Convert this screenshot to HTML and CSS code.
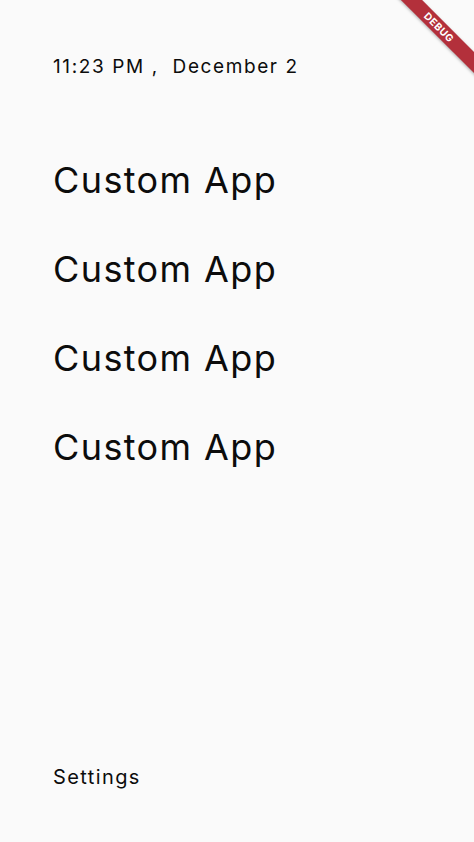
FILE: index.html
```html
<!DOCTYPE html>
<html lang="en">
<head>
    <meta charset="UTF-8">
    <meta name="viewport" content="width=device-width, initial-scale=1.0">
    <title>Custom App</title>
    <link rel="stylesheet" href="styles.css">
</head>
<body>
<div class="screen">
    <p class="clock">11:23 PM ,&nbsp; December 2</p>
    <ul class="apps">
        <li>Custom App</li>
        <li>Custom App</li>
        <li>Custom App</li>
        <li>Custom App</li>
    </ul>
    <p class="settings">Settings</p>
    <div class="banner">DEBUG</div>
</div>
</body>
</html>
```

FILE: styles.css
```css
* {margin:0; padding:0; list-style:none; box-sizing:border-box;}
body {background:#fafafa; font-family:Inter, "Noto Sans", sans-serif; color:#0c0c0c;}
.screen {position:relative; height:842px; overflow:hidden; padding:52px 0 0 53px; display:flex; flex-direction:column;}
.clock {font-size:19px; line-height:30px; letter-spacing:1.6px;}
.apps {margin-top:76px; display:flex; flex-direction:column; gap:44px;}
.apps li {font-size:36px; line-height:45px; letter-spacing:1.4px;}
.settings {margin-top:auto; margin-bottom:50px; font-size:20px; line-height:30px; letter-spacing:1.4px;}
.banner {position:absolute; top:20px; right:-30px; width:130px; height:15px; background:#b3303b; color:#fff; font-size:10px; font-weight:bold; line-height:15px; letter-spacing:.5px; text-align:center; transform:rotate(45deg); box-shadow:0 1px 3px rgba(0,0,0,.3);}
```
